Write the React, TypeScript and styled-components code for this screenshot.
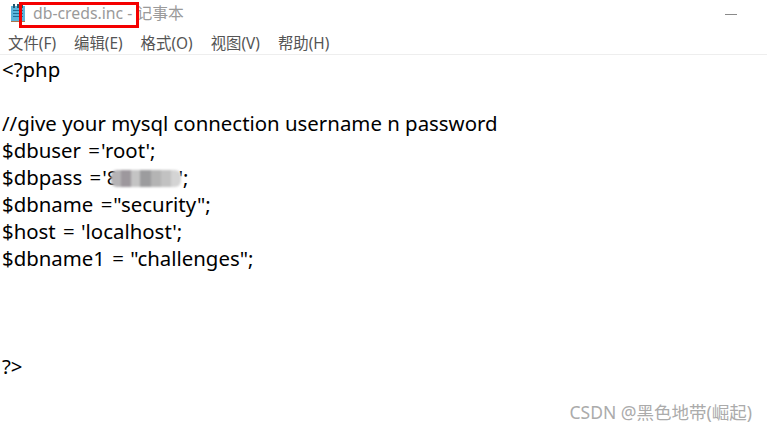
import React from 'react';
import styled, { createGlobalStyle } from 'styled-components';

const GlobalStyle = createGlobalStyle`
  html, body {
    margin: 0;
    padding: 0;
    background: #fff;
  }
`;

const Window = styled.div`
  position: relative;
  width: 767px;
  height: 430px;
  overflow: hidden;
  background: #fff;
  font-family: "Noto Sans", "Noto Sans CJK SC", sans-serif;
`;

const TitleBar = styled.div`
  display: flex;
  align-items: center;
  height: 26px;
  padding-left: 10px;
`;

const AppIcon = styled.svg`
  width: 16px;
  height: 20px;
  flex: none;
`;

const Title = styled.span`
  margin-left: 7px;
  font-size: 15.8px;
  line-height: 20px;
  color: #9a9a9a;
  white-space: nowrap;
`;

const MinimizeMark = styled.div`
  margin-left: auto;
  margin-right: 30px;
  width: 12px;
  height: 1px;
  margin-top: 2px;
  background: #8a8a8a;
`;

const MenuBar = styled.div`
  display: flex;
  align-items: center;
  gap: 18px;
  height: 21px;
  padding: 7px 0 0 8px;
  border-bottom: 1px solid #eeeeee;
`;

const MenuItem = styled.span`
  font-size: 15.4px;
  line-height: 20px;
  color: #555;
  white-space: nowrap;
`;

const Editor = styled.div`
  padding: 1px 0 0 2px;
  font-size: 20.4px;
  line-height: 27px;
  color: #000;
`;

const Line = styled.div`
  height: 27px;
  white-space: pre;
`;

const Op = styled.span`
  margin: 0 1px 0 2px;
`;

const Redacted = styled.span`
  display: inline-block;
  width: 70px;
  height: 17px;
  margin-left: -8px;
  margin-right: -2px;
  vertical-align: -2px;
  border-radius: 6px;
  background: linear-gradient(
    90deg,
    #b5b3b5 0 14%,
    #9d989d 14% 28%,
    #c4c4c4 28% 42%,
    #9c9c9e 42% 57%,
    #b4b4b4 57% 72%,
    #c2c2c2 72% 86%,
    #d4d4d4 86% 100%
  );
  filter: blur(1.2px);
`;

const Highlight = styled.div`
  position: absolute;
  left: 19px;
  top: 2px;
  width: 120px;
  height: 26px;
  box-sizing: border-box;
  border: 3px solid #f40000;
`;

const Watermark = styled.div`
  position: absolute;
  right: 15px;
  top: 399px;
  font-size: 17.5px;
  color: #ababab;
  white-space: nowrap;
`;

const menus = ['文件(F)', '编辑(E)', '格式(O)', '视图(V)', '帮助(H)'];

const App = () => {
  return (
    <Window>
      <GlobalStyle />
      <TitleBar>
        <AppIcon viewBox="0 0 16 20">
          <rect x="1" y="3" width="14" height="15" fill="#5bb5dc" />
          <rect x="3" y="1" width="2" height="4" fill="#24566e" />
          <rect x="7" y="1" width="2" height="4" fill="#24566e" />
          <rect x="11" y="1" width="2" height="4" fill="#24566e" />
          <rect x="3" y="7" width="10" height="1" fill="#1f6f96" />
          <rect x="3" y="10" width="10" height="1" fill="#1f6f96" />
          <rect x="3" y="13" width="10" height="1" fill="#1f6f96" />
          <rect x="1" y="18" width="14" height="1" fill="#a9784f" />
        </AppIcon>
        <Title>db-creds.inc - 记事本</Title>
        <MinimizeMark />
      </TitleBar>
      <MenuBar>
        {menus.map((m) => (
          <MenuItem key={m}>{m}</MenuItem>
        ))}
      </MenuBar>
      <Editor>
        <Line>{'<?php'}</Line>
        <Line />
        <Line>//give your mysql connection username n password</Line>
        <Line>$dbuser <Op>=</Op>'root';</Line>
        <Line>
          $dbpass <Op>=</Op>'8<Redacted />';
        </Line>
        <Line>$dbname <Op>=</Op>"security";</Line>
        <Line>$host <Op>=</Op> 'localhost';</Line>
        <Line>$dbname1 <Op>=</Op> "challenges";</Line>
        <Line />
        <Line />
        <Line />
        <Line>{'?>'}</Line>
      </Editor>
      <Highlight />
      <Watermark>CSDN @黑色地带(崛起)</Watermark>
    </Window>
  );
};

export default App;
